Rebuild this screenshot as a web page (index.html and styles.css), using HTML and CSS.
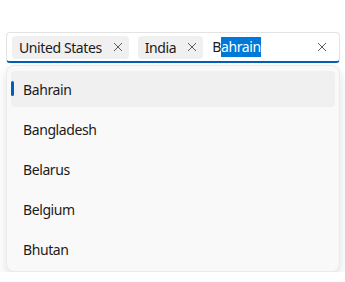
FILE: index.html
```html
<!DOCTYPE html>
<html>
<head>
<meta charset="utf-8">
<link rel="stylesheet" href="styles.css">
</head>
<body>
<div class="wrap">
  <div class="box">
    <span class="chip"><span class="chip-text">United States</span><svg class="x" viewBox="0 0 10 10"><path d="M1 1L9 9M9 1L1 9"/></svg></span>
    <span class="chip"><span class="chip-text">India</span><svg class="x" viewBox="0 0 10 10"><path d="M1 1L9 9M9 1L1 9"/></svg></span>
    <span class="input">B<span class="sel">ahrain</span></span>
    <svg class="x clear" viewBox="0 0 10 10"><path d="M1 1L9 9M9 1L1 9"/></svg>
  </div>
  <div class="popup">
    <div class="item active"><span class="ind"></span>Bahrain</div>
    <div class="item">Bangladesh</div>
    <div class="item">Belarus</div>
    <div class="item">Belgium</div>
    <div class="item">Bhutan</div>
  </div>
</div>
</body>
</html>
```
FILE: styles.css
```css
html, body { margin: 0; background: #fff; }
body {
  font-family: "Noto Sans", "Open Sans", sans-serif;
  font-size: 14px;
  letter-spacing: -0.4px;
  color: #1b1b1b;
}
.wrap { padding: 32px 0 0 6px; width: 334px; }
.box {
  box-sizing: border-box;
  height: 31px;
  border: 1px solid #e3e3e3;
  border-bottom: 2px solid #005fb8;
  border-radius: 4px;
  background: #fff;
  display: flex;
  align-items: center;
  padding: 0 12px 0 5px;
  gap: 9px;
}
.chip {
  display: flex;
  align-items: center;
  height: 23px;
  background: #f0f0f0;
  border-radius: 4px;
  padding: 0 6px 0 7px;
  gap: 11px;
}
.x { width: 10px; height: 10px; flex: none; }
.x path { stroke: #5c5c5c; stroke-width: 1; fill: none; }
.input { flex: 1; line-height: 20px; }
.sel { background: #0078d7; color: #fff; display: inline-block; line-height: 20px; }
.popup {
  box-sizing: border-box;
  margin-top: 2px;
  background: #f9f9f9;
  border: 1px solid #ebebeb;
  border-radius: 8px;
  box-shadow: 0 5px 12px rgba(0,0,0,0.12);
  padding: 5px 4px 4px;
  display: flex;
  flex-direction: column;
  gap: 4px;
}
.item {
  position: relative;
  height: 36px;
  border-radius: 4px;
  display: flex;
  align-items: center;
  padding-left: 12px;
}
.item.active { background: #f0f0f0; }
.ind {
  position: absolute;
  left: 0;
  top: 10px;
  width: 3px;
  height: 15px;
  border-radius: 2px;
  background: #005fb8;
}
```
